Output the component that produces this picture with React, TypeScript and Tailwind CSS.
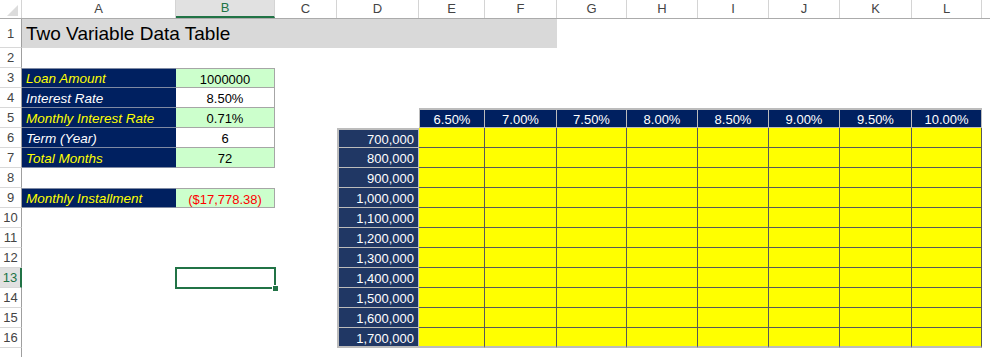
import React from 'react';

const LETTERS = ['A', 'B', 'C', 'D', 'E', 'F', 'G', 'H', 'I', 'J', 'K', 'L'];
const WIDTHS = [
  'w-[154px]', 'w-[99px]', 'w-[62px]', 'w-[82px]', 'w-[66px]', 'w-[72px]',
  'w-[70px]', 'w-[71px]', 'w-[71px]', 'w-[71px]', 'w-[72px]', 'w-[70px]',
];
const RATES = ['6.50%', '7.00%', '7.50%', '8.00%', '8.50%', '9.00%', '9.50%', '10.00%'];
const AMOUNTS = [
  '700,000', '800,000', '900,000', '1,000,000', '1,100,000', '1,200,000',
  '1,300,000', '1,400,000', '1,500,000', '1,600,000', '1,700,000',
];

const INPUTS: Record<number, { label: string; value: string; hi: boolean }> = {
  3: { label: 'Loan Amount', value: '1000000', hi: true },
  4: { label: 'Interest Rate', value: '8.50%', hi: false },
  5: { label: 'Monthly Interest Rate', value: '0.71%', hi: true },
  6: { label: 'Term (Year)', value: '6', hi: false },
  7: { label: 'Total Months', value: '72', hi: true },
};

const FONT = "font-['Liberation_Sans',Arial,sans-serif]";

function Cell({ c, className = '', children }: { c: number; className?: string; children?: React.ReactNode }) {
  return (
    <div className={`${WIDTHS[c]} shrink-0 h-full flex items-center pt-[3px] whitespace-nowrap box-border ${className}`}>
      {children}
    </div>
  );
}

function RowNum({ n }: { n?: number }) {
  const sel = n === 13;
  return (
    <div
      className={`w-[22px] shrink-0 h-full flex items-center justify-center pt-px text-[13px] box-border border-b border-[#d8d8d8] ${
        sel ? 'bg-[#e1e1e1] text-[#217346] border-r-2 border-r-[#217346]' : 'text-[#444] border-r border-r-[#9f9f9f]'
      }`}
    >
      {n}
    </div>
  );
}

function renderCell(r: number, c: number) {
  const inp = INPUTS[r];
  // input block A3:B7
  if (inp && c === 0) {
    return (
      <Cell key={c} c={c} className={`bg-[#002060] pl-1 italic text-[13.5px] border-b border-[#7f8aa3] ${r === 3 ? 'border-t' : ''} ${inp.hi ? 'text-[#ffff00]' : 'text-white'}`}>
        {inp.label}
      </Cell>
    );
  }
  if (inp && c === 1) {
    return (
      <Cell key={c} c={c} className={`justify-center text-[13px] text-black border-r border-b border-[#a6a6a6] ${r === 3 ? 'border-t' : ''} ${inp.hi ? 'bg-[#ccffcc]' : 'bg-white'}`}>
        {inp.value}
      </Cell>
    );
  }
  // monthly installment
  if (r === 9 && c === 0) {
    return (
      <Cell key={c} c={c} className="bg-[#002060] pl-1 italic text-[13.5px] text-[#ffff00] border-t border-b border-[#7f8aa3]">
        Monthly Installment
      </Cell>
    );
  }
  if (r === 9 && c === 1) {
    return (
      <Cell key={c} c={c} className="justify-center bg-[#ccffcc] text-[13px] text-[#ff0000] border-t border-r border-b border-[#a6a6a6]">
        ($17,778.38)
      </Cell>
    );
  }
  // selected cell B13
  if (r === 13 && c === 1) {
    return (
      <Cell key={c} c={c} className="relative">
        <div className="absolute -left-px -top-px w-[101px] h-[22px] border-2 border-[#217346]" />
        <div className="absolute -right-[4px] -bottom-[4px] w-[7px] h-[7px] bg-[#217346] border border-white" />
      </Cell>
    );
  }
  // data table header
  if (r === 5 && c >= 4) {
    return (
      <Cell key={c} c={c} className={`justify-center bg-[#002060] text-white text-[13px] border-t-2 border-r border-b border-[#bcbcbc] ${c === 4 ? 'border-l' : ''}`}>
        {RATES[c - 4]}
      </Cell>
    );
  }
  if (r >= 6 && r <= 16 && c === 3) {
    return (
      <Cell key={c} c={c} className={`justify-end pr-1 bg-[#203764] text-white text-[13px] border-l-2 border-r border-b border-[#bcbcbc] ${r === 6 ? 'border-t-2' : ''} ${r === 16 ? 'border-b-2' : ''}`}>
        {AMOUNTS[r - 6]}
      </Cell>
    );
  }
  if (r >= 6 && r <= 16 && c >= 4) {
    return (
      <Cell key={c} c={c} className={`bg-[#ffff00] border-r border-b border-[#595959] ${r === 16 ? 'border-b-2 border-b-[#bcbcbc]' : ''}`} />
    );
  }
  return <Cell key={c} c={c} />;
}

export default function App() {
  const rows = Array.from({ length: 16 }, (_, i) => i + 1);
  return (
    <div className={`w-[990px] h-[357px] overflow-hidden bg-white ${FONT}`}>
      {/* column headers */}
      <div className="flex h-[19px] border-b border-[#ababab] box-border">
        <div className="w-[22px] shrink-0 h-full border-r border-[#d4d4d4] relative">
          <svg width="22" height="18" className="absolute left-0 top-0">
            <polygon points="18,5 18,16 7,16" fill="#dcdcdc" />
          </svg>
        </div>
        {LETTERS.map((l, i) => (
          <div
            key={l}
            className={`${WIDTHS[i]} shrink-0 h-full flex items-center justify-center text-[13px] box-border border-r border-[#d4d4d4] ${
              i === 1 ? 'bg-[#e1e1e1] text-[#217346] border-b-2 border-b-[#217346]' : 'text-[#444]'
            }`}
          >
            {l}
          </div>
        ))}
        <div className="flex-1" />
      </div>

      {rows.map((r) => (
        <div key={r} className={`flex ${r === 1 ? 'h-[29px]' : 'h-[20px]'}`}>
          <RowNum n={r} />
          {r === 1 ? (
            <div className="w-[535px] shrink-0 h-full bg-[#d9d9d9] flex items-center pl-1 pt-[2px] text-[19px] text-black whitespace-nowrap">
              Two Variable Data Table
            </div>
          ) : (
            LETTERS.map((_, c) => renderCell(r, c))
          )}
          <div className="flex-1" />
        </div>
      ))}

      <div className="flex h-[20px]">
        <RowNum />
      </div>
    </div>
  );
}
